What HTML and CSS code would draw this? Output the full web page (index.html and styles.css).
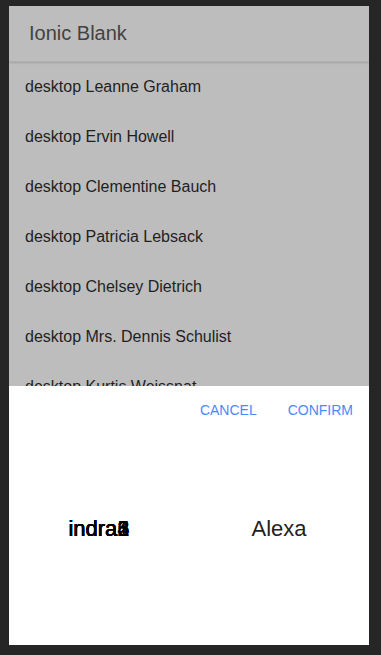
FILE: index.html
```html
<!DOCTYPE html>
<html lang="en">
<head>
  <meta charset="UTF-8">
  <title>Ionic Blank</title>
  <link rel="stylesheet" href="styles.css">
</head>
<body>

<div class="app">
  <div class="header">
    <div class="title">Ionic Blank</div>
  </div>

  <div class="list">
    <div class="item">desktop Leanne Graham</div>
    <div class="item">desktop Ervin Howell</div>
    <div class="item">desktop Clementine Bauch</div>
    <div class="item">desktop Patricia Lebsack</div>
    <div class="item">desktop Chelsey Dietrich</div>
    <div class="item">desktop Mrs. Dennis Schulist</div>
    <div class="item">desktop Kurtis Weissnat</div>
    <div class="item">desktop Nicholas Runolfsdottir V</div>
  </div>

  <!-- picker sheet over the list -->
  <div class="picker">
    <div class="picker-toolbar">
      <button class="picker-btn">Cancel</button>
      <button class="picker-btn">Confirm</button>
    </div>
    <div class="picker-columns">
      <div class="picker-col">
        <div class="opt-stack">
          <span class="opt">indra1</span>
          <span class="opt">indra2</span>
          <span class="opt">indra3</span>
          <span class="opt">indra4</span>
          <span class="opt">indra5</span>
          <span class="opt">indra6</span>
        </div>
      </div>
      <div class="picker-col">
        <span class="opt light">Alexa</span>
      </div>
    </div>
  </div>
</div>

</body>
</html>
```

FILE: styles.css
```css
body {
  margin: 0;
  background-color: #262626;
  font-family: "Liberation Sans", Arial, sans-serif;
}

.app {
  position: relative;
  width: 360px;
  height: 639px;
  margin: 6px 0 0 9px;
  background-color: #bdbdbd;
  display: flex;
  flex-direction: column;
  overflow: hidden;
}

.header {
  height: 56px;
  flex-shrink: 0;
  display: flex;
  align-items: center;
  padding-left: 20px;
  background-color: #bdbdbd;
  box-shadow: 0 1px 2px rgba(0, 0, 0, 0.15);
  border-bottom: 1px solid #b0b0b0;
  box-sizing: border-box;
}

.title {
  font-size: 20px;
  color: #424242;
}

.list {
  flex: 1;
  overflow: hidden;
}

.item {
  height: 50px;
  line-height: 50px;
  padding-left: 16px;
  font-size: 16px;
  color: #1f1f1f;
  white-space: nowrap;
}

.picker {
  position: absolute;
  left: 0;
  right: 0;
  bottom: 0;
  height: 259px;
  background-color: #fff;
  display: flex;
  flex-direction: column;
}

.picker-toolbar {
  height: 44px;
  padding-top: 2px;
  display: flex;
  justify-content: flex-end;
  align-items: center;
}

.picker-btn {
  background: none;
  border: none;
  padding: 0 16px;
  height: 44px;
  font-family: inherit;
  font-size: 14px;
  text-transform: uppercase;
  color: #488aff;
  cursor: pointer;
}

.picker-btn:first-child {
  padding-right: 15px;
}

.picker-columns {
  flex: 1;
  display: flex;
}

.picker-col {
  flex: 1;
  display: flex;
  justify-content: center;
  align-items: flex-start;
  padding-top: 82px;
}

.opt-stack {
  display: grid;
}

.opt-stack .opt {
  grid-area: 1 / 1;
}

.opt {
  font-size: 22px;
  line-height: 30px;
  color: #000;
}

.opt.light {
  color: #222;
}
```
